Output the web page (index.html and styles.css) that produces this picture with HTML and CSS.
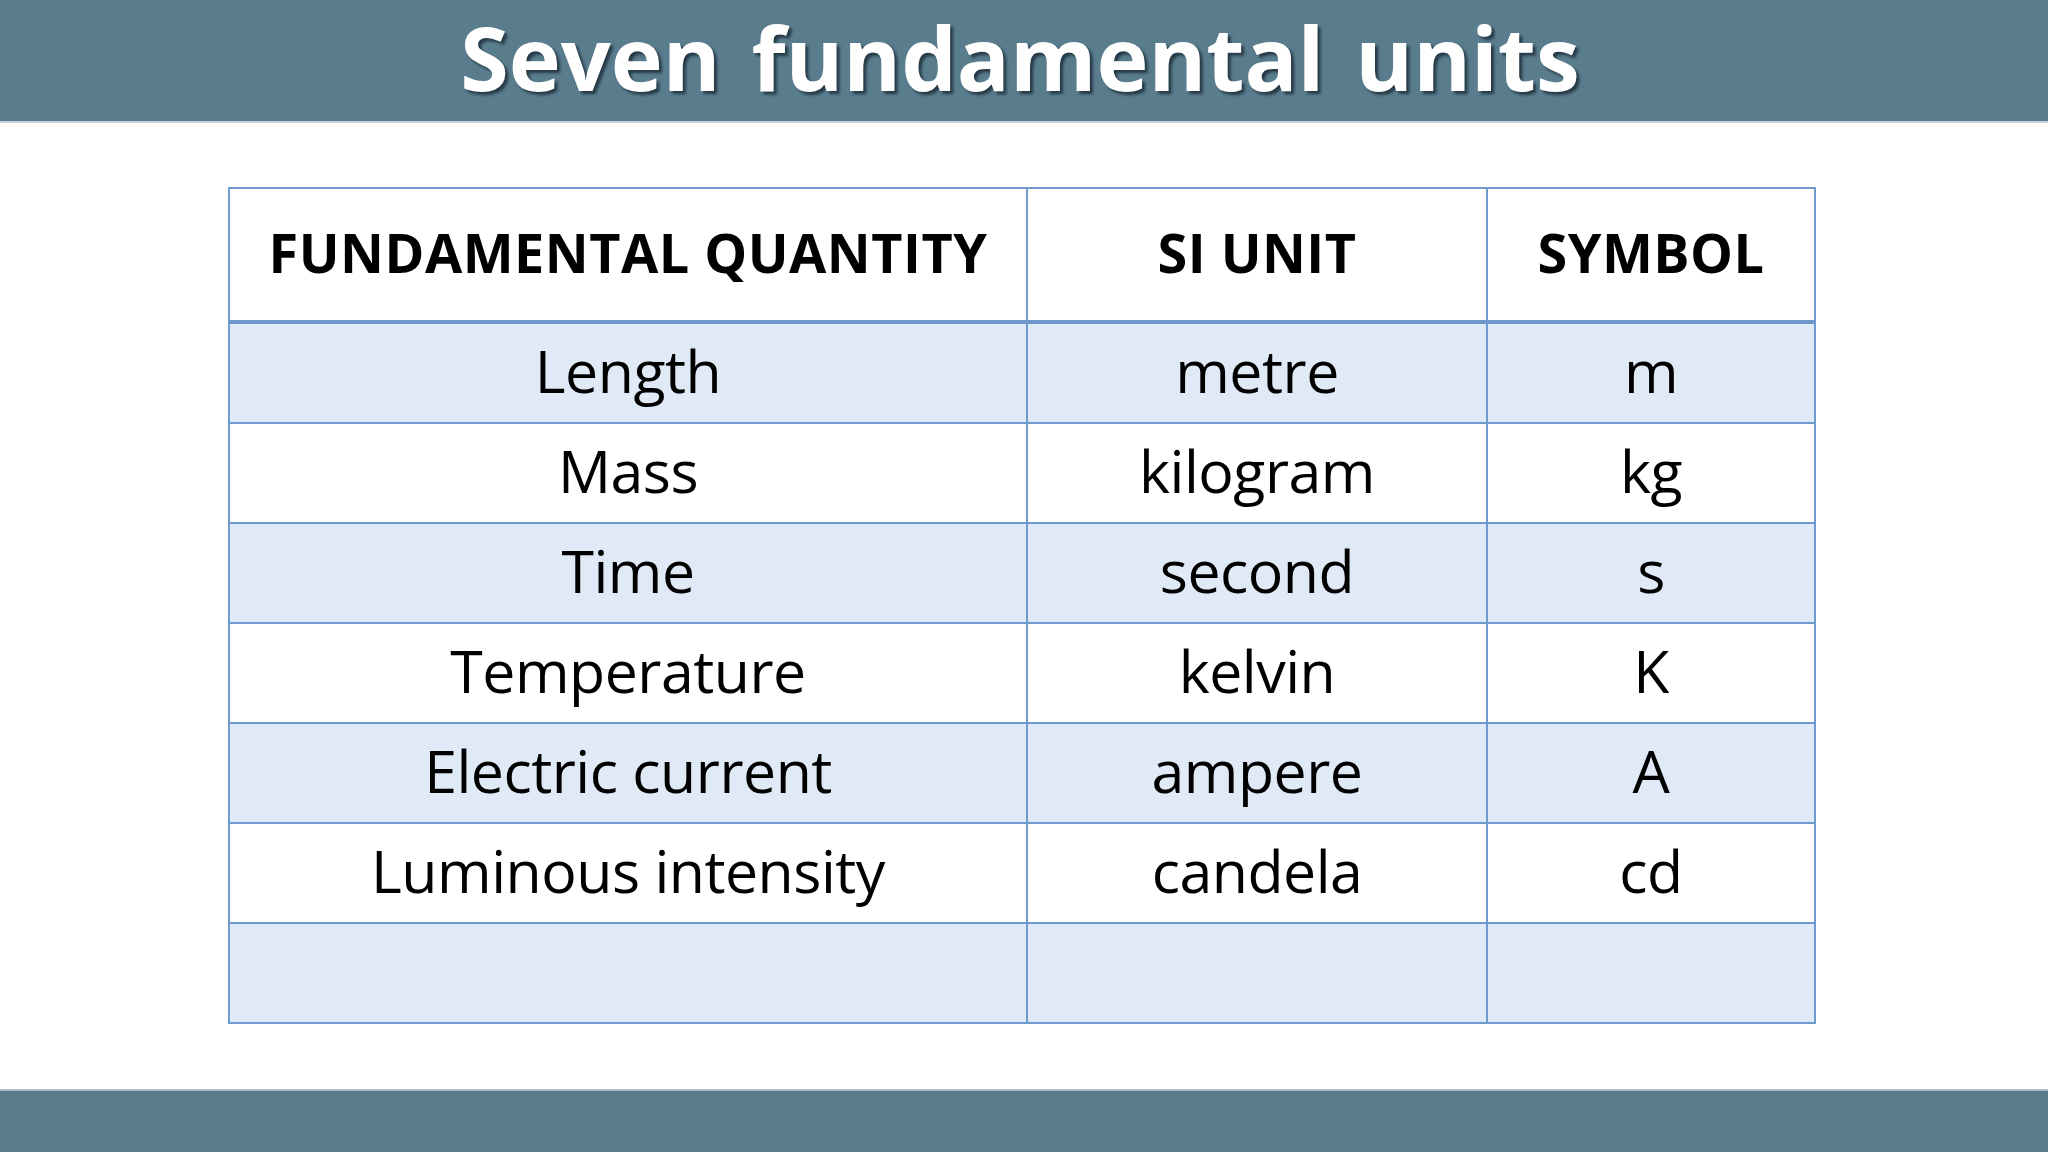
FILE: index.html
```html
<!DOCTYPE html>
<html lang="en">
<head>
<meta charset="utf-8">
<title>Seven fundamental units</title>
<link rel="stylesheet" href="styles.css">
</head>
<body>
<div class="slide">
  <header class="topbar">
    <h1 class="title">Seven fundamental units</h1>
  </header>
  <main class="content">
    <table class="units">
      <colgroup>
        <col class="c1"><col class="c2"><col class="c3">
      </colgroup>
      <thead>
        <tr><th>FUNDAMENTAL QUANTITY</th><th>SI UNIT</th><th>SYMBOL</th></tr>
      </thead>
      <tbody>
        <tr class="alt"><td>Length</td><td>metre</td><td>m</td></tr>
        <tr><td>Mass</td><td>kilogram</td><td>kg</td></tr>
        <tr class="alt"><td>Time</td><td>second</td><td>s</td></tr>
        <tr><td>Temperature</td><td>kelvin</td><td>K</td></tr>
        <tr class="alt"><td>Electric current</td><td>ampere</td><td>A</td></tr>
        <tr><td>Luminous intensity</td><td>candela</td><td>cd</td></tr>
        <tr class="alt"><td></td><td></td><td></td></tr>
      </tbody>
    </table>
  </main>
  <footer class="bottombar"></footer>
</div>
</body>
</html>
```

FILE: styles.css
```css
html, body {
  margin: 0;
  padding: 0;
  background: #ffffff;
}

.slide {
  width: 2048px;
  height: 1152px;
  display: flex;
  flex-direction: column;
  overflow: hidden;
  font-family: "Comic Sans MS", "Open Sans", "DejaVu Sans", sans-serif;
}

.topbar {
  height: 123px;
  padding: 0 8px 6px 0;
  background: #5a7d8e;
  border-bottom: 2px solid #c9cfdc;
  box-sizing: border-box;
  display: flex;
  align-items: center;
  justify-content: center;
}

.title {
  margin: 0;
  color: #ffffff;
  font-size: 88px;
  font-weight: 700;
  line-height: 1.2;
  letter-spacing: 0;
  word-spacing: 8px;
  white-space: nowrap;
  text-shadow: 3px 3px 3px rgba(20, 35, 45, 0.75);
}

.content {
  flex: 1;
  padding: 64px 0 0 228px;
  box-sizing: border-box;
}

.units {
  border-collapse: collapse;
  width: 1586px;
  table-layout: fixed;
  color: #000000;
}

.c1 { width: 798px; }
.c2 { width: 460px; }
.c3 { width: 328px; }

.units th,
.units td {
  border: 2px solid #6f9bd0;
  text-align: center;
  padding: 0;
}

.units th {
  height: 125px;
  padding-bottom: 6px;
  font-size: 54px;
  font-weight: 700;
  letter-spacing: 0.5px;
  background: #ffffff;
  border-bottom: 4px solid #6c98cf;
}

.units td {
  height: 91px;
  padding-bottom: 7px;
  font-size: 59px;
  font-weight: 400;
  letter-spacing: -0.5px;
  background: #ffffff;
}

.units tr.alt td {
  background: #dfeaf6;
}

.bottombar {
  height: 63px;
  background: #5a7d8e;
  border-top: 2px solid #a9bcc6;
  box-sizing: border-box;
}
```
